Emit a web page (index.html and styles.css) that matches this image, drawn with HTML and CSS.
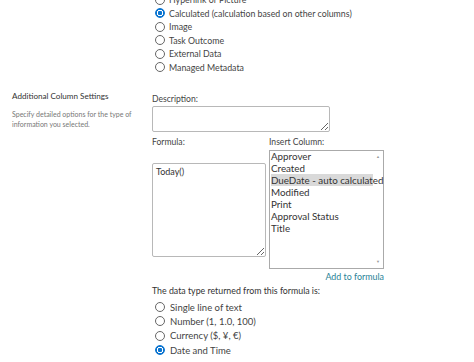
FILE: index.html
```html
<!doctype html>
<html>
  <head>
    <meta charset="utf-8">
    <title>Column settings</title>
    <link rel="stylesheet" href="styles.css">
  </head>
  <body>
    <div class="page">
      <div class="section top">
        <div class="side"></div>
        <div class="main">
          <ul class="choices">
            <li><span class="radio"></span>Hyperlink or Picture</li>
            <li><span class="radio on"></span>Calculated (calculation based on other columns)</li>
            <li><span class="radio"></span>Image</li>
            <li><span class="radio"></span>Task Outcome</li>
            <li><span class="radio"></span>External Data</li>
            <li><span class="radio"></span>Managed Metadata</li>
          </ul>
        </div>
      </div>

      <div class="section">
        <div class="side">
          <h3>Additional Column Settings</h3>
          <p>Specify detailed options for the type of information you selected.</p>
        </div>
        <div class="main">
          <label class="lbl">Description:</label>
          <textarea class="desc"></textarea>

          <div class="formula-row">
            <div class="fcol">
              <label class="lbl">Formula:</label>
              <textarea class="formula">Today()</textarea>
            </div>
            <div class="icol">
              <label class="lbl">Insert Column:</label>
              <div class="listbox">
                <ul class="items">
                  <li>Approver</li>
                  <li>Created</li>
                  <li class="sel">DueDate - auto calculated</li>
                  <li>Modified</li>
                  <li>Print</li>
                  <li>Approval Status</li>
                  <li>Title</li>
                </ul>
                <div class="scroll">
                  <span class="arr">&#9650;</span>
                  <span class="arr">&#9660;</span>
                </div>
              </div>
              <a class="add" href="#">Add to formula</a>
            </div>
          </div>

          <p class="ret">The data type returned from this formula is:</p>
          <ul class="choices types">
            <li><span class="radio"></span>Single line of text</li>
            <li><span class="radio"></span>Number (1, 1.0, 100)</li>
            <li><span class="radio"></span>Currency ($, ¥, €)</li>
            <li><span class="radio on"></span>Date and Time</li>
          </ul>
        </div>
      </div>
    </div>
  </body>
</html>
```

FILE: styles.css
```css
body{
    margin:0;
    background:#fff;
    color:#444;
    font-family:Lato,"Open Sans",sans-serif;
    overflow:hidden;
}
.page{margin-top:-7px;}
.section{
    display:grid;
    grid-template-columns:152px 1fr;
}
.side{padding-left:12px;}
.side h3{
    margin:0;
    font-size:8.1px; font-weight:normal;
    color:#333;
}
.side p{
    margin:8px 0 0;
    width:125px;
    font-size:7px; line-height:10px;
    color:#777;
}
.choices{
    list-style:none;
    margin:0; padding:0;
}
.choices li{
    display:flex; align-items:center;
    height:13.5px;
    font-size:8.8px;
    color:#444;
}
.radio{
    width:8px; height:8px;
    border:1px solid #666;
    border-radius:50%;
    margin:0 4px 0 3px;
    flex:none;
}
.radio.on{
    border-color:#0a74d0;
    background:radial-gradient(circle,#0a74d0 0 2px,#fff 2.5px 3px,#0a74d0 3.5px);
}
.top{margin-bottom:12px;}
.section:not(.top) .side{padding-top:5px;}
.lbl{
    display:block;
    font-size:8.6px;
    color:#444;
    line-height:12px;
}
.main > .lbl{margin-top:7px;}
textarea{
    display:block;
    box-sizing:border-box;
    border:1px solid #b8b8b8;
    border-radius:2px;
    font-family:inherit;
    font-size:9px;
    color:#333;
    margin:0;
}
.desc{
    width:178px; height:26px;
    margin-top:1px;
}
.formula-row{
    display:flex;
    gap:3px;
    margin-top:4px;
}
.fcol{width:114px;}
.formula{
    width:114px; height:94px;
    margin-top:15px;
    padding:2px 3px;
}
.icol{width:115px;}
.listbox{
    display:flex;
    height:119px;
    border:1px solid #aaa;
    margin-top:2px;
    box-sizing:border-box;
}
.items{
    list-style:none;
    margin:-1px 0 0; padding:0 0 0 1px;
    flex:1;
    min-width:0;
}
.items li{
    height:12px; line-height:12px;
    font-size:9.8px;
    color:#333;
    white-space:nowrap;
}
.items li.sel{background:#d9d9d9;}
.scroll{
    width:10px;
    flex:none;
    display:flex; flex-direction:column;
    justify-content:space-between;
    align-items:center;
    padding:3px 0;
}
.arr{font-size:4px; color:#999; line-height:6px;}
.add{
    display:block;
    text-align:right;
    margin-top:2px;
    font-size:8.9px;
    color:#2a8397;
    text-decoration:none;
}
.ret{
    margin:3px 0 4px;
    font-size:8.8px;
    color:#333;
}
.types li{height:14.3px; font-size:9.5px;}
.types .radio{margin-right:5px;}
```
